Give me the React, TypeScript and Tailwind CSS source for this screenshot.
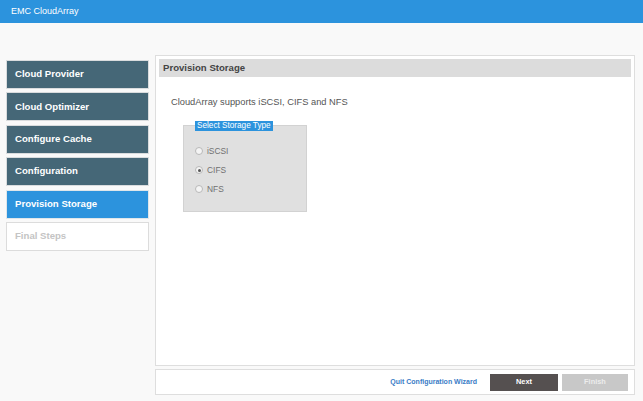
import React from 'react';

const steps = [
  { label: 'Cloud Provider', state: 'done' },
  { label: 'Cloud Optimizer', state: 'done' },
  { label: 'Configure Cache', state: 'done' },
  { label: 'Configuration', state: 'done' },
  { label: 'Provision Storage', state: 'active' },
  { label: 'Final Steps', state: 'todo' },
];

const storageTypes = ['iSCSI', 'CIFS', 'NFS'];

function StepItem({ label, state }: { label: string; state: string }) {
  const look =
    state === 'active'
      ? 'bg-[#2c93dd] text-white border-[#dfe6ea]'
      : state === 'done'
      ? 'bg-[#456777] text-white border-[#d9dcde]'
      : 'bg-white text-[#c4c4c4] border-[#dcdcdc]';
  return (
    <div className={`h-[29px] border flex items-center pl-[8px] text-[9.6px] font-bold ${look}`}>
      {label}
    </div>
  );
}

function Radio({ label, checked }: { label: string; checked?: boolean }) {
  return (
    <label className="flex items-center h-[19px] gap-[4px]">
      <span className="w-[8px] h-[8px] rounded-full border border-[#b9b9b9] bg-[#f4f4f4] flex items-center justify-center">
        {checked && <span className="w-[3px] h-[3px] rounded-full bg-[#555]" />}
      </span>
      <span className="text-[8.4px] text-[#707070]">{label}</span>
    </label>
  );
}

export default function App() {
  return (
    <div className="h-[401px] w-[643px] bg-[#f9f9f9] overflow-hidden" style={{ fontFamily: '"Liberation Sans", Arial, sans-serif' }}>
      {/* Top bar */}
      <header className="h-[23px] bg-[#2c93dd] flex items-center pl-[11px] text-[9px] text-white">
        EMC CloudArray
      </header>

      <div className="flex gap-[6px] pl-[6px] pr-[8px] pt-[32px]">
        {/* Wizard steps */}
        <nav className="w-[143px] mt-[5px] flex flex-col gap-[3.4px]">
          {steps.map((s) => (
            <StepItem key={s.label} label={s.label} state={s.state} />
          ))}
        </nav>

        <div className="flex-1 flex flex-col">
          {/* Main panel */}
          <section className="h-[311px] bg-white border border-[#dedede] p-[3px]">
            <div className="h-[18px] bg-[#dcdcdc] flex items-center pl-[4px] text-[9.6px] font-bold text-[#444]">
              Provision Storage
            </div>
            <p className="mt-[19px] ml-[12px] text-[9.3px] text-[#555]">CloudArray supports iSCSI, CIFS and NFS</p>

            <fieldset className="mt-[11px] ml-[24px] w-[124px] h-[91px] bg-[#e0e0e0] border border-[#d2d2d2] pl-[11px]">
              <legend className="bg-[#2c93dd] text-white text-[8.2px] leading-[10px] px-[2px]">Select Storage Type</legend>
              <div className="mt-[11px] flex flex-col">
                {storageTypes.map((t) => (
                  <Radio key={t} label={t} checked={t === 'CIFS'} />
                ))}
              </div>
            </fieldset>
          </section>

          {/* Footer */}
          <footer className="mt-[3px] h-[26px] bg-white border border-[#dedede] flex items-center justify-end pr-[6px]">
            <a className="text-[7px] font-bold text-[#3a7cc6] mr-[13px]">Quit Configuration Wizard</a>
            <button className="w-[68px] h-[17px] bg-[#555050] text-white text-[7.4px] font-bold mr-[4px]">Next</button>
            <button className="w-[66px] h-[17px] bg-[#c8c8c8] text-[#ececec] text-[7.4px] font-bold">Finish</button>
          </footer>
        </div>
      </div>
    </div>
  );
}
